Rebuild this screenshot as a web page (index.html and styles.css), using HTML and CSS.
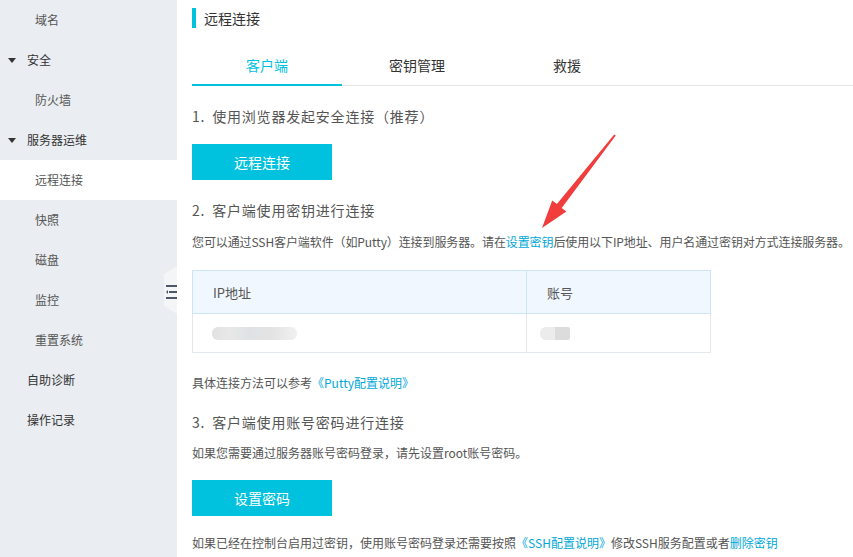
FILE: index.html
```html
<!DOCTYPE html>
<html lang="zh-CN">
<head>
    <meta charset="UTF-8">
    <meta name="viewport" content="width=device-width, initial-scale=1.0">
    <title>远程连接</title>
    <link rel="stylesheet" href="styles.css">
</head>
<body>
    <div class="page">
        <!-- 侧边栏 -->
        <aside class="sidebar">
            <ul>
                <li class="sub">域名</li>
                <li class="group"><span class="caret"></span>安全</li>
                <li class="sub">防火墙</li>
                <li class="group"><span class="caret"></span>服务器运维</li>
                <li class="sub active">远程连接</li>
                <li class="sub">快照</li>
                <li class="sub">磁盘</li>
                <li class="sub">监控</li>
                <li class="sub">重置系统</li>
                <li class="group plain">自助诊断</li>
                <li class="group plain">操作记录</li>
            </ul>
            <div class="collapse-handle">
                <svg width="13" height="48" viewBox="0 0 13 48">
                    <polygon points="13,0 0,8 0,40 13,48" fill="#f4f5f6"/>
                    <rect x="2" y="19" width="11" height="2" fill="#4d5766"/>
                    <rect x="5" y="25" width="8" height="2" fill="#4d5766"/>
                    <polygon points="2,26 4,24 4,28" fill="#4d5766"/>
                    <rect x="2" y="31" width="11" height="2" fill="#4d5766"/>
                </svg>
            </div>
        </aside>

        <!-- 主内容 -->
        <main class="content">
            <div class="page-title">远程连接</div>

            <div class="tabs">
                <div class="tab active">客户端</div>
                <div class="tab">密钥管理</div>
                <div class="tab">救援</div>
            </div>

            <h3 class="step">1. 使用浏览器发起安全连接（推荐）</h3>
            <button class="btn">远程连接</button>

            <h3 class="step">2. 客户端使用密钥进行连接</h3>
            <p class="desc tight">您可以通过SSH客户端软件（如Putty）连接到服务器。请在<a href="#">设置密钥</a>后使用以下IP地址、用户名通过密钥对方式连接服务器。</p>

            <table class="conn-table">
                <thead>
                    <tr>
                        <th class="col-ip">IP地址</th>
                        <th>账号</th>
                    </tr>
                </thead>
                <tbody>
                    <tr>
                        <td><span class="blur blur-ip"></span></td>
                        <td><span class="blur blur-user"></span></td>
                    </tr>
                </tbody>
            </table>

            <p class="desc ref">具体连接方法可以参考<a href="#">《Putty配置说明》</a></p>

            <h3 class="step step3">3. 客户端使用账号密码进行连接</h3>
            <p class="desc">如果您需要通过服务器账号密码登录，请先设置root账号密码。</p>
            <button class="btn">设置密码</button>
            <p class="desc last">如果已经在控制台启用过密钥，使用账号密码登录还需要按照<a href="#">《SSH配置说明》</a>修改SSH服务配置或者<a href="#">删除密钥</a></p>
        </main>
    </div>

    <!-- 标注箭头 -->
    <svg class="annotation" width="853" height="557" viewBox="0 0 853 557">
        <polygon fill="#f23d3d" points="542,228 552.2,200.4 556.9,204.1 614.2,134.4 615.8,135.6 561.7,207.9 566.4,211.6"/>
    </svg>
</body>
</html>
```

FILE: styles.css
```css
body {
    margin: 0;
    padding: 0;
    font-family: "Noto Sans CJK SC", "Noto Sans", sans-serif;
    color: #555;
    background-color: #fff;
    overflow: hidden;
}

.page {
    display: flex;
    height: 557px;
}

/* 侧边栏 */
.sidebar {
    position: relative;
    width: 177px;
    flex-shrink: 0;
    background-color: #eaedf1;
}

.sidebar ul {
    list-style: none;
    margin: 0;
    padding: 0;
}

.sidebar li {
    height: 40px;
    line-height: 40px;
    font-size: 12px;
    display: flex;
    align-items: center;
}

.sidebar li.sub {
    padding-left: 35px;
    color: #555;
}

.sidebar li.group {
    padding-left: 8px;
    color: #333;
}

.sidebar li.plain {
    padding-left: 27px;
}

.sidebar li.active {
    background-color: #fff;
}

.caret {
    width: 0;
    height: 0;
    border-left: 4px solid transparent;
    border-right: 4px solid transparent;
    border-top: 5px solid #333;
    margin-right: 11px;
}

.collapse-handle {
    position: absolute;
    right: 0;
    top: 266px;
    width: 13px;
    height: 48px;
}

.collapse-handle svg {
    display: block;
}

/* 主内容 */
.content {
    flex: 1;
    padding: 8px 0 0 15px;
    min-width: 0;
}

.page-title {
    height: 20px;
    line-height: 20px;
    border-left: 4px solid #00c1de;
    padding-left: 8px;
    font-size: 14px;
    color: #333;
}

.tabs {
    display: flex;
    margin-top: 17px;
    border-bottom: 1px solid #e6e6e6;
}

.tab {
    width: 150px;
    height: 40px;
    line-height: 40px;
    text-align: center;
    font-size: 14px;
    color: #333;
}

.tab.active {
    color: #00c1de;
    margin-bottom: -1px;
    height: 41px;
    box-shadow: inset 0 -2px 0 #00c1de;
}

.step {
    margin: 20px 0 0;
    font-size: 14px;
    font-weight: normal;
    line-height: 20px;
    height: 20px;
    letter-spacing: 0.8px;
    word-spacing: 3px;
    color: #555;
}

.btn {
    display: block;
    width: 140px;
    height: 36px;
    margin-top: 18px;
    border: none;
    background-color: #00c1de;
    color: #fff;
    font-family: inherit;
    font-size: 14px;
    cursor: pointer;
}

.desc {
    margin: 13px 0 0;
    font-size: 12px;
    line-height: 18px;
    height: 18px;
    white-space: nowrap;
    color: #555;
}

.desc.tight {
    letter-spacing: -0.1px;
}

.desc a {
    color: #00a8d8;
    text-decoration: none;
}

.step3 + .desc {
    margin-top: 12px;
}

.ref {
    margin-top: 21px;
}

.last {
    margin-top: 18px;
}

/* 表格 */
.conn-table {
    width: 519px;
    margin-top: 19px;
    border-collapse: collapse;
    font-size: 13px;
}

.conn-table th {
    height: 42px;
    padding: 0 0 0 20px;
    text-align: left;
    font-weight: normal;
    color: #555;
    background-color: #f0f7ff;
    border: 1px solid #cde4fa;
}

.conn-table th.col-ip {
    width: 313px;
}

.conn-table td {
    height: 38px;
    padding: 0 0 0 19px;
    border: 1px solid #e3e8ee;
}

.conn-table td + td {
    padding-left: 13px;
}

.blur {
    display: block;
    height: 13px;
    border-radius: 6px;
    background: linear-gradient(to right, #e2e2e2, #e8e8e8 20%, #dfe2e4 45%, #e4e3e3 70%, #f1f1f1);
}

.blur-ip {
    width: 85px;
}

.blur-user {
    width: 30px;
    background: linear-gradient(to right, #ececec 50%, #dcdcdc 50%);
    border-radius: 6px 2px 2px 6px;
}

/* 标注 */
.annotation {
    position: absolute;
    left: 0;
    top: 0;
    pointer-events: none;
}
```
